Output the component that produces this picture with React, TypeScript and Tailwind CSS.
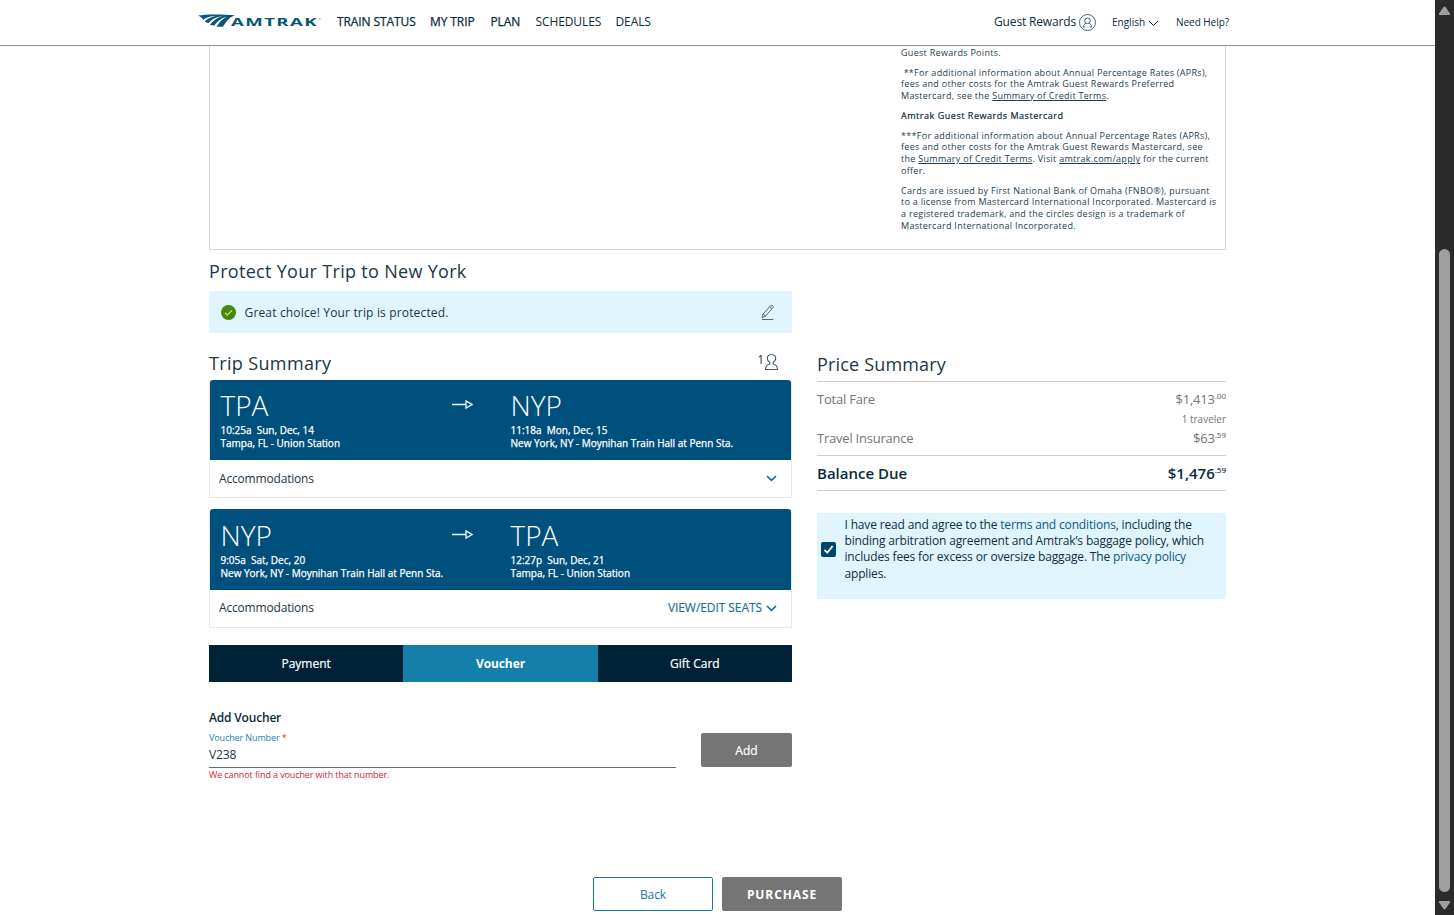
import type { ReactNode } from "react";

type Stop = { code: string; time: string; station: string };

function AmtrakLogo() {
  return (
    <svg className="mt-px" width="124" height="16" viewBox="0 0 124 16" aria-label="Amtrak">
      <g fill="#0a5578">
        <path d="M0 1.6C7 0 24 .2 37 1.2 34 2.3 31.5 4 29.6 6L24.8 12.8H18.6C20.5 9.5 24 5.2 29 2.6 23 4.2 18.8 8 16.6 11.4L12 11C14.5 7.2 19 3.6 25 2 18 2.8 13.3 5.6 10.4 9.2L6.6 7.4C9.5 4.6 13.5 2.6 18 1.7 12 2 8.2 3.4 5.2 5.7 4 4 2.3 2.5 0 1.6Z" />
      </g>
      <text
        x="33"
        y="12.3"
        textLength="87"
        lengthAdjust="spacingAndGlyphs"
        letterSpacing="0.8"
        fontFamily="Open Sans, sans-serif"
        fontWeight="700"
        fontSize="10.5"
        fill="#0a5578"
      >
        AMTRAK
      </text>
      <circle cx="121.8" cy="5" r="0.8" fill="#6f9bb0" />
    </svg>
  );
}

function Header() {
  return (
    <header className="flex h-[46px] items-center border-b border-[#8b9096] pb-[2px] pl-[198px] pr-[206px] text-[12px] text-[#0b2a3c]">
      <AmtrakLogo />
      <nav className="ml-[15px] flex items-center gap-[15px] whitespace-nowrap pt-px leading-4 tracking-[-0.1px]">
        <a className="w-[78px] [-webkit-text-stroke:0.25px]">TRAIN STATUS</a>
        <a className="w-[45.5px] [-webkit-text-stroke:0.25px]">MY TRIP</a>
        <a className="w-[30px] [-webkit-text-stroke:0.25px]">PLAN</a>
        <a className="w-[65px]">SCHEDULES</a>
        <a>DEALS</a>
      </nav>
      <div className="ml-auto flex items-center pt-px leading-4">
        <span className="tracking-[-0.16px]">Guest Rewards</span>
        <svg className="ml-[3px]" width="17" height="17" viewBox="0 0 17 17" fill="none" stroke="#33505f" strokeWidth="0.9">
          <circle cx="8.5" cy="8.5" r="8" />
          <circle cx="8.5" cy="6.8" r="2.8" />
          <path d="M4.3 13c.1-2.2 1.2-3 2.8-3.7M12.7 13c-.1-2.2-1.2-3-2.8-3.7M4.3 13h2M10.7 13h2" />
        </svg>
        <span className="ml-[16px] text-[10px]">English</span>
        <svg className="ml-[3px] mt-[3px]" width="11" height="7" viewBox="0 0 11 7" fill="none" stroke="currentColor">
          <path d="M1 1l4.5 4.5L10 1" />
        </svg>
        <span className="ml-[17px] text-[10px] tracking-[-0.05px]">Need Help?</span>
      </div>
    </header>
  );
}

function Lines({ children }: { children: ReactNode[] }) {
  return (
    <p className="mb-[8.2px]">
      {children.map((line, i) => (
        <span key={i} className="block whitespace-nowrap">
          {line}
        </span>
      ))}
    </p>
  );
}

function CardTerms() {
  return (
    <section className="flex h-[204px] justify-end border-x border-b border-[#d3d3d3]">
      <div className="w-[324px] pt-[0.7px] text-[9px] leading-[11.7px] tracking-[0.29px] text-[#24404f]">
        <Lines>{["Guest Rewards Points."]}</Lines>
        <Lines>
          {[
            <>&nbsp;**For additional information about Annual Percentage Rates (APRs),</>,
            "fees and other costs for the Amtrak Guest Rewards Preferred",
            <>Mastercard, see the <u>Summary of Credit Terms</u>.</>,
          ]}
        </Lines>
        <div className="tracking-[0.53px] text-[#0b2a3c] [-webkit-text-stroke:0.2px]">
          <Lines>{["Amtrak Guest Rewards Mastercard"]}</Lines>
        </div>
        <Lines>
          {[
            "***For additional information about Annual Percentage Rates (APRs),",
            "fees and other costs for the Amtrak Guest Rewards Mastercard, see",
            <>the <u>Summary of Credit Terms</u>. Visit <u>amtrak.com/apply</u> for the current</>,
            "offer.",
          ]}
        </Lines>
        <Lines>
          {[
            "Cards are issued by First National Bank of Omaha (FNBO®), pursuant",
            "to a license from Mastercard International Incorporated. Mastercard is",
            "a registered trademark, and the circles design is a trademark of",
            "Mastercard International Incorporated.",
          ]}
        </Lines>
      </div>
    </section>
  );
}

function StopInfo({ stop }: { stop: Stop }) {
  return (
    <div className="whitespace-nowrap text-[10px] leading-[13px] text-white [-webkit-text-stroke:0.25px]">
      <p className="mb-[4px] text-[28px] font-light leading-[30px] [-webkit-text-stroke:0px]">{stop.code}</p>
      <p>{stop.time}</p>
      <p>{stop.station}</p>
    </div>
  );
}

function TripCard({ from, to, action }: { from: Stop; to: Stop; action?: string }) {
  return (
    <div className="flex flex-col rounded-t border border-t-0 border-[#e6e8ea]">
      <div className="flex flex-1 rounded-t-[3px] bg-[#00507d] pl-[10.5px] pt-[10.4px]">
        <div className="flex w-[290px] justify-between">
          <StopInfo stop={from} />
          <svg className="mr-[38px] mt-[9px]" width="22" height="11" viewBox="0 0 22 11" fill="none" stroke="#e8faff" strokeWidth="1.3">
            <path d="M1 5.5h14M15 2v7l6-3.5z" />
          </svg>
        </div>
        <StopInfo stop={to} />
      </div>
      <div className="flex h-[37px] items-center justify-between pl-[9px] pr-[14px] text-[12px] text-[#1c3645]">
        <span className="tracking-[-0.18px]">Accommodations</span>
        <span className="flex items-center gap-[4px] tracking-[-0.07px] text-[#146f98] [-webkit-text-stroke:0.15px]">
          {action}
          <svg width="11" height="7" viewBox="0 0 11 7" fill="none" stroke="currentColor" strokeWidth="1.6">
            <path d="M1 1l4.5 4.4L10 1" />
          </svg>
        </span>
      </div>
    </div>
  );
}

function PaymentTabs() {
  return (
    <div className="mt-[17px] grid h-[37px] grid-cols-3 text-center text-[12px] leading-[37px] text-white">
      <div className="bg-[#002236] [-webkit-text-stroke:0.2px]">Payment</div>
      <div className="bg-[#147fa9] font-bold tracking-[-0.1px]">Voucher</div>
      <div className="bg-[#002236] [-webkit-text-stroke:0.2px]">Gift Card</div>
    </div>
  );
}

function VoucherForm() {
  return (
    <div className="mt-[27px]">
      <h3 className="text-[12px] font-semibold leading-[17px] tracking-[-0.18px] text-[#0b2a3c]">Add Voucher</h3>
      <div className="flex items-start justify-between">
        <div className="w-[467px] text-[9px] tracking-[-0.11px]">
          <label className="mt-[6px] block leading-[12px] text-[#2583b5]">
            Voucher Number <span className="text-[#d9363e]">*</span>
          </label>
          <div className="h-[24px] border-b border-[#686d70] pt-[3px] text-[12px] leading-[16px] text-[#1c3645]">V238</div>
          <p className="leading-[14px] text-[#d32631]">We cannot find a voucher with that number.</p>
        </div>
        <button className="mt-[7px] h-[34px] w-[91px] rounded-[2px] bg-[#757575] pt-[2px] text-[12px] text-white [-webkit-text-stroke:0.2px]">
          Add
        </button>
      </div>
    </div>
  );
}

function Price({ dollars, cents }: { dollars: string; cents: string }) {
  return (
    <span className="flex items-start">
      {dollars}
      <span className="mt-[-3px] text-[8px] font-normal tracking-normal [-webkit-text-stroke:0.15px]">.{cents}</span>
    </span>
  );
}

function PriceSummary() {
  return (
    <aside className="w-[409px] pt-[104px]">
      <h2 className="h-[28px] border-b border-[#cfcfcf] text-[18px] leading-[20px] tracking-[0.17px] text-[#1c3645]">
        Price Summary
      </h2>
      <div className="h-[74px] border-b border-[#cfcfcf] pt-[7px] text-[13px] leading-[20px] tracking-[-0.22px] text-[#757575]">
        <div className="flex justify-between">
          <span>Total Fare</span>
          <Price dollars="$1,413" cents="00" />
        </div>
        <p className="pt-px text-right text-[10px] leading-[18px] tracking-normal">1 traveler</p>
        <div className="flex justify-between">
          <span>Travel Insurance</span>
          <Price dollars="$63" cents="59" />
        </div>
      </div>
      <div className="flex h-[35px] justify-between border-b border-[#cfcfcf] text-[15px] font-semibold leading-[34px] text-[#0b2a3c]">
        <span>Balance Due</span>
        <Price dollars="$1,476" cents="59" />
      </div>
      <div className="mt-[22px] flex h-[86px] bg-[#e0f4fd] pl-[4px] pt-[4px] text-[12px] leading-[16.2px] tracking-[-0.16px] text-[#0f2f42]">
        <svg className="mr-[8.5px] mt-[25px]" width="15" height="15" viewBox="0 0 15 15">
          <rect width="15" height="15" rx="2" fill="#00456b" />
          <path d="M3.5 7.8l2.8 2.9L11.6 4" fill="none" stroke="#fff" strokeWidth="1.8" />
        </svg>
        <p className="whitespace-nowrap">
          I have read and agree to the <a className="text-[#0b5a82]">terms and conditions</a>, including the
          <br />
          binding arbitration agreement and Amtrak’s baggage policy, which
          <br />
          includes fees for excess or oversize baggage. The <a className="text-[#0b5a82]">privacy policy</a>
          <br />
          applies.
        </p>
      </div>
    </aside>
  );
}

function TripDetails() {
  const tampa = "Tampa, FL - Union Station";
  const newYork = "New York, NY - Moynihan Train Hall at Penn Sta.";

  return (
    <div className="w-[583px]">
      <h2 className="mt-[9px] text-[18px] leading-[24px] tracking-[0.31px] text-[#1c3645]">
        Protect Your Trip to New York
      </h2>
      <div className="mt-[8px] flex h-[42px] items-center bg-[#e0f4fd] pl-[12px] pr-[17px] text-[12px] text-[#1c3645]">
        <svg width="15" height="15" viewBox="0 0 15 15">
          <circle cx="7.5" cy="7.5" r="7.5" fill="#48850c" />
          <path d="M4 7.8l2.3 2.2L11 5.2" fill="none" stroke="#b9dc75" strokeWidth="1.3" />
        </svg>
        <span className="ml-[8.5px] pt-[2px] tracking-[0.16px]">Great choice! Your trip is protected.</span>
        <svg className="ml-auto" width="14" height="17" viewBox="0 0 14 17" fill="none" stroke="#405661" strokeWidth="0.9">
          <path d="M1 13.5l1.1-3.5L9.8 1.6c.8-.9 3.2.6 2.3 1.8L4.6 12zM2.1 10l2.5 2M8.8 2.8l2.3 1.8M1 15.5h11.5" />
        </svg>
      </div>
      <div className="flex h-[47px] justify-between pr-[13px] text-[#1c3645]">
        <h2 className="mt-[18px] text-[18px] leading-[24px] tracking-[0.35px]">Trip Summary</h2>
        <div className="mt-[19px] flex">
          <span className="pt-px text-[12px] leading-[14px]">1</span>
          <svg width="15" height="19" viewBox="0 0 15 19" fill="none" stroke="#405661" strokeWidth="1.1">
            <path d="M5.8 10.2C3 8.7 2.7 5.6 4.1 3.9 5.6 2 9.4 2 10.9 3.9c1.4 1.7 1.1 4.8-1.7 6.3v1.8c2.8.5 4.2 1.8 4.3 5.5h-12c.1-3.7 1.5-5 4.3-5.5z" />
          </svg>
        </div>
      </div>
      <div className="grid grid-rows-[118.2px_118.8px] gap-[11px]">
        <TripCard
          from={{ code: "TPA", time: "10:25a\u00a0 Sun, Dec, 14", station: tampa }}
          to={{ code: "NYP", time: "11:18a\u00a0 Mon, Dec, 15", station: newYork }}
        />
        <TripCard
          from={{ code: "NYP", time: "9:05a\u00a0 Sat, Dec, 20", station: newYork }}
          to={{ code: "TPA", time: "12:27p\u00a0 Sun, Dec, 21", station: tampa }}
          action="VIEW/EDIT SEATS"
        />
      </div>
      <PaymentTabs />
      <VoucherForm />
    </div>
  );
}

function Scrollbar() {
  return (
    <div className="flex h-full w-[19px] flex-col items-center bg-[#2b2b2b]">
      <svg className="mt-[6px]" width="13" height="10" viewBox="0 0 13 10">
        <path d="M5.4 1.3q1.1-1.4 2.2 0L12 7.5q.6 1.5-1 1.5H2Q.4 9 1 7.5z" fill="#9f9f9f" />
      </svg>
      <div className="mt-[233px] h-[643px] w-[11px] rounded-full bg-[#9f9f9f]" />
      <svg className="mt-[8px]" width="13" height="10" viewBox="0 0 13 10">
        <path d="M5.4 8.7q1.1 1.4 2.2 0L12 2.5Q12.6 1 11 1H2Q.4 1 1 2.5z" fill="#9f9f9f" />
      </svg>
    </div>
  );
}

export default function App() {
  return (
    <div className="flex h-[915px] w-[1454px] overflow-hidden bg-white font-['Open_Sans',sans-serif]">
      <div className="flex h-full w-[1435px] flex-col">
        <Header />
        <main className="ml-[209px] w-[1017px]">
          <CardTerms />
          <div className="flex justify-between">
            <TripDetails />
            <PriceSummary />
          </div>
        </main>
        <footer className="mb-[4px] mt-auto flex justify-center gap-[9px] text-[12px]">
          <button className="h-[34px] w-[120px] rounded-[2px] border border-[#1679a8] pt-[2px] tracking-[-0.1px] text-[#1679a8]">
            Back
          </button>
          <button className="h-[34px] w-[120px] rounded-[2px] bg-[#757575] pt-[2px] font-bold tracking-[0.9px] text-white">
            PURCHASE
          </button>
        </footer>
      </div>
      <Scrollbar />
    </div>
  );
}
